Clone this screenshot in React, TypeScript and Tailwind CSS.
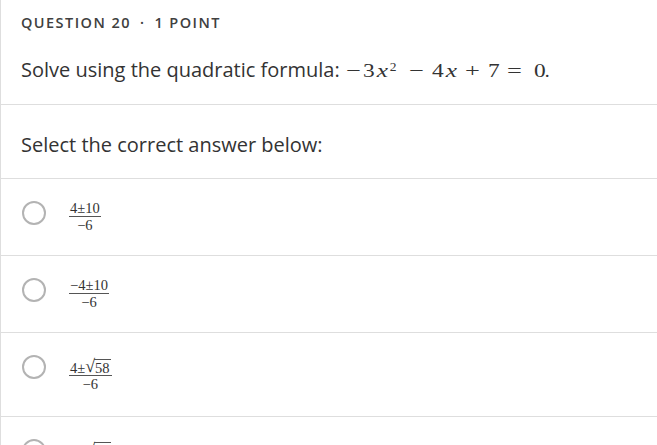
import React from "react";

const serif = "font-['Liberation_Serif',serif]";

function Frac({ num, den }: { num: React.ReactNode; den: React.ReactNode }) {
  return (
    <div className={`flex flex-col items-center text-[14.5px] leading-none text-[#333] ${serif}`}>
      <div className="px-[1px] border-b border-[#555] w-full flex justify-center">{num}</div>
      <div className="pt-[1px]">{den}</div>
    </div>
  );
}

function Sqrt({ children }: { children: React.ReactNode }) {
  return (
    <span className="inline-flex items-end">
      <span className="text-[18px] leading-none -mr-[1px]">√</span>
      <span className="border-t border-[#555] pt-[1px] px-[1px] leading-none">{children}</span>
    </span>
  );
}

function Option({ num, den, tall }: { num: React.ReactNode; den: React.ReactNode; tall?: boolean }) {
  return (
    <div
      className={`flex items-start border-b border-[#dedede] pl-[21px] pt-[22px] ${tall ? "pb-[24px]" : "pb-[23px]"}`}
    >
      <div className="w-6 h-6 shrink-0 rounded-full border-2 border-[#b3b3b3] bg-white" />
      <div className={tall ? "ml-[23px] mt-[2px]" : "ml-[23px]"}>
        <Frac num={num} den={den} />
      </div>
    </div>
  );
}

const sqrtNum = (
  <span className="inline-flex items-end">
    4±<Sqrt>58</Sqrt>
  </span>
);

// one glyph of the equation, stretched a little, in a box of fixed width
function G({ w, op, it, right, children }: {
  w: string;
  op?: boolean;
  it?: boolean;
  right?: boolean;
  children: React.ReactNode;
}) {
  return (
    <span className={`inline-block ${right ? "text-right" : "text-center"} ${w} ${it ? "italic" : ""}`}>
      <span className={op ? "inline-block scale-x-[1.35]" : it ? "inline-block scale-x-[1.3]" : "inline-block scale-x-[1.2]"}>
        {children}
      </span>
    </span>
  );
}

export default function App() {
  return (
    <div className="w-[657px] h-[445px] overflow-hidden bg-white font-['Open_Sans',sans-serif] text-[#333]">
      <div className="border-l border-[#dedede] h-full">
        <div className="border-b border-[#dedede] pl-[20px] pt-[12px] pb-[19px]">
          <div className="text-[14.5px] leading-[22px] font-semibold tracking-[0.1em] uppercase text-[#404040]">
            Question 20<span className="mx-[9px]">·</span>1 Point
          </div>
          <div className="mt-[22px] text-[20px] leading-[28px] flex items-baseline">
            <span>Solve using the quadratic formula:</span>
            <span className={`ml-[4px] text-[19.5px] ${serif}`}>
              <G w="w-[19px]" op>−</G>
              <G w="w-[13px]">3</G>
              <G w="w-[14px]" it>x</G>
              <sup className="inline-block w-[10px] text-[13.5px] -top-[0.45em]">2</sup>
              <G w="w-[33px]" op>−</G>
              <G w="w-[10px]">4</G>
              <G w="w-[17px]" it>x</G>
              <G w="w-[25px]" op>+</G>
              <G w="w-[18px]">7</G>
              <G w="w-[24px]" op>=</G>
              <G w="w-[18px]" right>0</G>
              <span>.</span>
            </span>
          </div>
        </div>
        <div className="border-b border-[#dedede] pl-[20px] pt-[26px] pb-[19px] text-[20px] leading-[28px]">
          Select the correct answer below:
        </div>
        <Option num="4±10" den="−6" />
        <Option num="−4±10" den="−6" />
        <Option num={sqrtNum} den="−6" tall />
        <Option num={sqrtNum} den="6" tall />
      </div>
    </div>
  );
}
